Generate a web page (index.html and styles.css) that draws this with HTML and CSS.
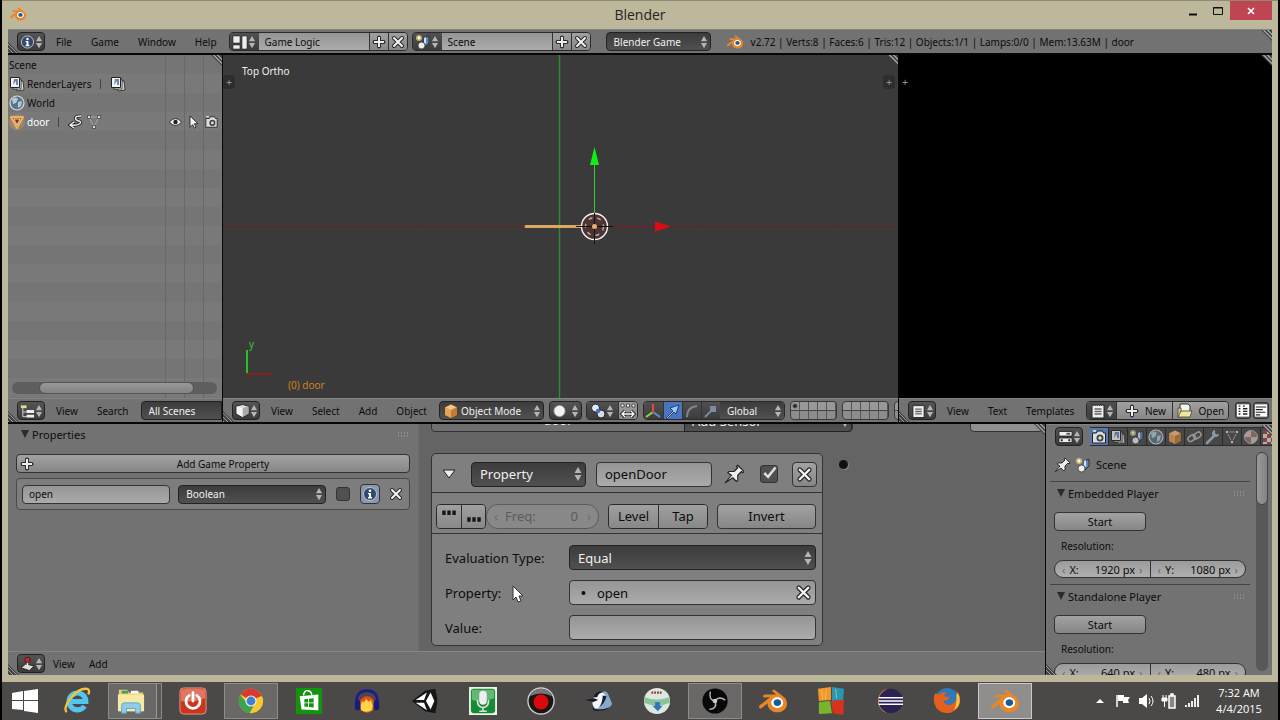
FILE: index.html
```html
<!DOCTYPE html>
<html lang="en">
<head>
  <meta charset="UTF-8">
  <meta name="viewport" content="width=device-width, initial-scale=1.0">
  <title>Blender</title>
  <link rel="stylesheet" href="styles.css">
</head>
<body>
  <!-- Shared icons -->
  <svg class="sprite" aria-hidden="true">
    <symbol id="arrows" viewBox="0 0 8 16"><path d="M4 1l3.5 6h-7zM4 15L.5 9h7z" fill="#b5b5b5"/></symbol>
    <symbol id="plus" viewBox="0 0 16 16"><path d="M8 3.500v9M3.500 8h9" stroke="#2a2a2a" stroke-width="4" stroke-linecap="round"/><path d="M8 3v10M3 8h10" stroke="#eee" stroke-width="2"/></symbol>
    <symbol id="cross" viewBox="0 0 16 16"><path d="M4 4l8 8M12 4l-8 8" stroke="#2a2a2a" stroke-width="4" stroke-linecap="round"/><path d="M4 4l8 8M12 4l-8 8" stroke="#f4f4f4" stroke-width="2" stroke-linecap="round"/></symbol>
    <symbol id="info" viewBox="0 0 16 16"><circle cx="8" cy="8" r="6.500" fill="#33496b" stroke="#b9c6dc"/><circle cx="8" cy="4.700" r="1.300" fill="#fff"/><path d="M6 7h3v4h1v1.500H6V11h1V8.300H6z" fill="#fff"/></symbol>
    <symbol id="layout" viewBox="0 0 16 16"><path d="M1 2h7v7H1zM1 11h7v4H1zM10 2h5v13h-5z" fill="#eee" stroke="#222" stroke-width=".6"/></symbol>
    <symbol id="scene" viewBox="0 0 16 16"><circle cx="4" cy="4" r="3" fill="#d8d490" opacity=".75"/><circle cx="4" cy="4" r="1.400" fill="#fffbd0"/><path d="M9 4l5-2v7l-4 4z" fill="#5f86c0" stroke="#233"/><path d="M9 4l2-1v6l-2 2z" fill="#d6e2f4"/><circle cx="6.500" cy="11.500" r="3.500" fill="#eee" stroke="#333" stroke-width=".8"/></symbol>
    <symbol id="blender" viewBox="0 0 24 24">
      <circle cx="15.700" cy="13.300" r="6" fill="#fff"/>
      <path fill="#1c5a96" d="M12.51 13.214c.046-.8.438-1.506 1.03-2.006a3.424 3.424 0 0 1 2.212-.79c.85 0 1.631.3 2.211.79.592.5.983 1.206 1.028 2.005.045.823-.285 1.586-.865 2.153a3.389 3.389 0 0 1-2.374.938 3.393 3.393 0 0 1-2.376-.938c-.58-.567-.91-1.33-.865-2.152"/>
      <path fill="#ea8528" d="M7.35 14.831c.006.314.106.922.256 1.398a7.372 7.372 0 0 0 1.593 2.757 8.227 8.227 0 0 0 2.787 2.001 8.947 8.947 0 0 0 3.66.76 8.964 8.964 0 0 0 3.657-.772 8.285 8.285 0 0 0 2.785-2.01 7.428 7.428 0 0 0 1.592-2.762 6.964 6.964 0 0 0 .25-3.074 7.123 7.123 0 0 0-1.016-2.779 7.764 7.764 0 0 0-1.852-2.043h.002L13.566 2.55l-.02-.015c-.492-.378-1.319-.376-1.86.002-.547.382-.609 1.015-.123 1.415l-.001.001 3.126 2.543-9.53.01h-.013c-.788.001-1.545.518-1.695 1.172-.154.665.38 1.217 1.2 1.22V8.9l4.83-.01-8.62 6.617-.034.025c-.813.622-1.075 1.658-.563 2.313.52.667 1.625.668 2.447.004L7.414 14s-.069.52-.063.831zm12.09 1.741c-.97.988-2.326 1.548-3.795 1.55-1.47.004-2.827-.552-3.797-1.538a4.51 4.51 0 0 1-1.036-1.622 4.282 4.282 0 0 1 .282-3.519 4.702 4.702 0 0 1 1.153-1.371c.942-.768 2.141-1.183 3.396-1.185 1.256-.002 2.455.41 3.398 1.175.48.391.87.854 1.152 1.367a4.28 4.28 0 0 1 .522 1.706 4.236 4.236 0 0 1-.239 1.811 4.54 4.54 0 0 1-1.035 1.626"/>
    </symbol>
    <symbol id="layers" viewBox="0 0 16 16"><path d="M6 5h8l1 9-7 1z" fill="#d8d8d8" stroke="#222" stroke-width=".8"/><path d="M4 3h8v10H4z" fill="#eee" stroke="#222" stroke-width=".8"/><path d="M1.500 1.500h9v10h-9z" fill="#f4f4f4" stroke="#222"/><path d="M5 3h4v6H7V5L4 9z" fill="#6b87b5"/></symbol>
    <symbol id="world" viewBox="0 0 16 16"><circle cx="8" cy="8" r="7" fill="#5d7488" stroke="#d4dde4" stroke-width="1.200"/><path d="M3 4q4-3 6 0l-2 4-3 1zM9 7l4-1-1 5-3 2z" fill="#b5cbd2"/></symbol>
    <symbol id="mesh" viewBox="0 0 16 16"><circle cx="8" cy="8" r="8" fill="#d9a060" opacity=".35"/><path d="M2 3h12L8 14z" fill="#8c5a22" stroke="#f0b060" stroke-width="2" stroke-linejoin="round"/><path d="M5 5h6l-3 6z" fill="#6b3e12" stroke="#fff0d0" stroke-width=".8"/></symbol>
    <symbol id="meshdata" viewBox="0 0 16 16"><path d="M3 3h10L8 13z" fill="none" stroke="#aaa"/><path d="M1.500 1.500h3v3h-3zM11.500 1.500h3v3h-3zM6.500 11.500h3v3h-3z" fill="#ddd" stroke="#333" stroke-width=".7"/></symbol>
    <symbol id="curve" viewBox="0 0 16 16"><path d="M13 2C5 2 7 6 11 7s0 5-8 4M6 8l-4 3 4 3" fill="none" stroke="#222" stroke-width="3.200"/><path d="M13 2C5 2 7 6 11 7s0 5-8 4M6 8l-4 3 4 3" fill="none" stroke="#eee" stroke-width="1.400"/></symbol>
    <symbol id="eye" viewBox="0 0 16 16"><path d="M1 8q7-8 14 0-7 8-14 0z" fill="#f2f2f2" stroke="#222"/><circle cx="8" cy="8" r="2.500" fill="#222"/></symbol>
    <symbol id="pointer" viewBox="0 0 16 16"><path d="M4 1l9 9H9l2 4-2 1-2-4-3 3z" fill="#f4f4f4" stroke="#222" stroke-linejoin="round"/></symbol>
    <symbol id="camera" viewBox="0 0 16 16"><path d="M1.500 4h4l1-2h5l1 2h2v10h-13z" fill="#ddd" stroke="#222"/><circle cx="9" cy="9" r="3.500" fill="#444"/><circle cx="9" cy="9" r="1.700" fill="#ddd"/><path d="M2 2h3" stroke="#eee" stroke-width="1.500"/></symbol>
    <symbol id="outliner" viewBox="0 0 16 16"><path d="M1 2h6v3H1z" fill="#e8dc8a"/><path d="M3 5v9h4M3 9h4" fill="none" stroke="#ddd"/><path d="M7 7h8v3H7zM7 12h8v3H7z" fill="#eee"/></symbol>
    <symbol id="viewcube" viewBox="0 0 16 16"><path d="M8 1l7 2v8l-7 4-7-4V3z" fill="#ddd" stroke="#222"/><path d="M8 5l6-2v8l-6 3z" fill="#aaa"/><path d="M8 5L2 3v8l6 3z" fill="#f4f4f4"/></symbol>
    <symbol id="cube" viewBox="0 0 16 16"><path d="M8 1l6 3v8l-6 3-6-3V4z" fill="#f6c489" stroke="#5a3a15" stroke-width=".8"/><path d="M8 7l6-3v8l-6 3z" fill="#c07e33"/><path d="M2 4l6 3v8l-6-3z" fill="#e5a35a"/></symbol>
    <symbol id="ball" viewBox="0 0 16 16"><circle cx="8" cy="8" r="6" fill="#f2f2f2" stroke="#999"/></symbol>
    <symbol id="pivot" viewBox="0 0 16 16"><circle cx="5.500" cy="5" r="4" fill="#e4ebf5" stroke="#223"/><circle cx="11" cy="11" r="4" fill="#d5dce8" stroke="#223"/><circle cx="8" cy="8" r="2.200" fill="#3f74c4"/></symbol>
    <symbol id="manip" viewBox="0 0 16 16"><path d="M2 11h12M5 8l-3 3 3 3M11 8l3 3-3 3" fill="none" stroke="#222" stroke-width="3.200"/><path d="M2 11h12M5 8l-3 3 3 3M11 8l3 3-3 3" fill="none" stroke="#fff" stroke-width="1.300"/><path d="M1 1h3v3H1zM6.500 1h3v3h-3zM12 1h3v3h-3z" fill="#eee" stroke="#222" stroke-width=".7"/></symbol>
    <symbol id="axes" viewBox="0 0 16 16"><path d="M8 9l-7 5" stroke="#7fe04a" stroke-width="2"/><path d="M8 9l7 5" stroke="#5d8fe0" stroke-width="2"/><path d="M8 10V1" stroke="#e8453c" stroke-width="2"/></symbol>
    <symbol id="translate" viewBox="0 0 16 16"><path d="M1 15l7-7-3-3 9-3-3 9-2-2-7 7z" fill="#9cc4ff" stroke="#1b2c50" stroke-width=".8"/></symbol>
    <symbol id="rotate" viewBox="0 0 16 16"><path d="M3 14Q3 4 13 3" fill="none" stroke="#7d8490" stroke-width="2"/></symbol>
    <symbol id="scale" viewBox="0 0 16 16"><path d="M2 14l7-7" stroke="#7d8aa0" stroke-width="2"/><path d="M7 3h6v6H7z" fill="#7d8aa0"/></symbol>
    <symbol id="textdoc" viewBox="0 0 16 16"><path d="M2 2h12v13H2z" fill="#eee" stroke="#222"/><path d="M3 2h10" stroke="#444" stroke-width="2" stroke-dasharray="1 1"/><path d="M4.500 6h7M4.500 8.500h7M4.500 11h7" stroke="#666" stroke-width="1.400"/></symbol>
    <symbol id="folder" viewBox="0 0 16 16"><path d="M3 1h8l2 2v8H3z" fill="#f4f4f4" stroke="#333"/><path d="M1 5h3v9H1z" fill="#d9cf8b" stroke="#4a4422" stroke-width=".8"/><path d="M4 8h11l-2 6H1z" fill="#efe6a5" stroke="#4a4422" stroke-width=".8"/></symbol>
    <symbol id="numbers" viewBox="0 0 16 16"><path d="M1 1h14v14H1z" fill="#fff"/><path d="M3 3h2M3 6h2M3 9h2M3 12h2M8 3h2M8 6h5M8 9h5M8 12h5" fill="none" stroke="#222" stroke-width="1.500"/></symbol>
    <symbol id="wrap" viewBox="0 0 16 16"><path d="M1 1h14v14H1z" fill="#fff"/><path d="M2 4h12M2 7h8M2 10h11M2 13h5" stroke="#222" stroke-width="1.400"/></symbol>
    <symbol id="joystick" viewBox="0 0 16 16"><path d="M1 12l5-4 9 2-5 5z" fill="#ddd" stroke="#222"/><path d="M8 11V5" stroke="#eee" stroke-width="1.500"/><circle cx="8" cy="3.500" r="2.800" fill="#c62a26" stroke="#511"/></symbol>
    <symbol id="props" viewBox="0 0 16 16"><path d="M1 2h14v5H1zM1 9h14v5H1z" fill="#eee" stroke="#222"/><path d="M9 3.500h4v2H9z" fill="#555"/><path d="M3 11.500h2M11 11.500h2" stroke="#222" stroke-width="2"/></symbol>
    <symbol id="pin" viewBox="0 0 16 16"><path d="M1 15l5-6-3-2 1-1 4 0 3-3-1-1 1-1 5 5-1 1-1-1-3 3v4l-1 1-3-3z" fill="#eee" stroke="#222" stroke-width=".9" stroke-linejoin="round"/></symbol>
    <symbol id="link" viewBox="0 0 16 16"><rect x="1.500" y="7" width="8" height="5" rx="2.500" transform="rotate(-35 5 9)" fill="none" stroke="#bbb" stroke-width="1.500"/><rect x="7" y="4" width="8" height="5" rx="2.500" transform="rotate(-35 11 6)" fill="none" stroke="#bbb" stroke-width="1.500"/></symbol>
    <symbol id="wrench" viewBox="0 0 16 16"><path d="M2 14l7-7" stroke="#a9bccd" stroke-width="2.600" stroke-linecap="round"/><path d="M14 5a3.500 3.500 0 1 1-4-4v3l1.500 1.500z" fill="#a9bccd"/></symbol>
    <symbol id="material" viewBox="0 0 16 16"><circle cx="8" cy="8" r="6.500" fill="#9c7068" stroke="#ccc" stroke-width=".8"/><path d="M8 1.500A6.500 6.500 0 0 0 1.500 8H8zM8 8h6.500A6.500 6.500 0 0 1 8 14.500z" fill="#c9c2bf"/></symbol>
    <symbol id="checker" viewBox="0 0 16 16"><path d="M1 1h14v14H1z" fill="#ddd"/><path d="M1 1h4v4H1zM9 1h4v4H9zM5 5h4v4H5zM13 5h2v4h-2zM1 9h4v4H1zM9 9h4v4H9zM5 13h4v2H5z" fill="#a5433c"/></symbol>
    <symbol id="pulse-up" viewBox="0 0 16 16"><path d="M2 3h3v4H2zM6.500 3h3v4h-3zM11 3h3v4h-3z" fill="#161616"/></symbol>
    <symbol id="pulse-down" viewBox="0 0 16 16"><path d="M2 9h3v4H2zM6.500 9h3v4h-3zM11 9h3v4h-3z" fill="#161616"/></symbol>
    <symbol id="tri" viewBox="0 0 8 8"><path d="M0 0h8L4 8z" fill="#2b2b2b"/></symbol>
    <symbol id="grip" viewBox="0 0 12 5"><path d="M0 1h12M0 4h12" stroke="#aaa" stroke-dasharray="1 2"/></symbol>
  </svg>

  <main class="window">
    <header class="titlebar">
      <svg class="app-icon"><use href="#blender"/></svg>
      <h1>Blender</h1>
      <div class="window-buttons">
        <button type="button" aria-label="Minimize"><svg viewBox="0 0 12 12"><path d="M2 9.500h8" stroke="#111" stroke-width="2"/></svg></button>
        <button type="button" aria-label="Maximize"><svg viewBox="0 0 12 12"><path d="M1.500 2.500h9v7h-9zM1 3h10" fill="none" stroke="#111"/></svg></button>
        <button type="button" class="close" aria-label="Close"><svg viewBox="0 0 12 12"><path d="M3 3l6 6M9 3l-6 6" stroke="#fff" stroke-width="1.600"/></svg></button>
      </div>
    </header>

    <div class="workspace">
      <!-- Info bar -->
      <div class="bar info-bar">
        <button type="button" class="editor-type" aria-label="Info editor"><svg><use href="#info"/></svg><svg class="arrows"><use href="#arrows"/></svg></button>
        <nav class="menu">
          <a href="#">File</a>
          <a href="#">Game</a>
          <a href="#">Window</a>
          <a href="#">Help</a>
        </nav>
        <div class="group data-block">
          <button type="button" class="dark" aria-label="Browse screens"><svg><use href="#layout"/></svg><svg class="arrows"><use href="#arrows"/></svg></button>
          <input type="text" value="Game Logic" aria-label="Screen">
          <button type="button" aria-label="Add screen"><svg><use href="#plus"/></svg></button>
          <button type="button" aria-label="Delete screen"><svg><use href="#cross"/></svg></button>
        </div>
        <div class="group data-block">
          <button type="button" class="dark" aria-label="Browse scenes"><svg><use href="#scene"/></svg><svg class="arrows"><use href="#arrows"/></svg></button>
          <input type="text" value="Scene" aria-label="Scene">
          <button type="button" aria-label="Add scene"><svg><use href="#plus"/></svg></button>
          <button type="button" aria-label="Delete scene"><svg><use href="#cross"/></svg></button>
        </div>
        <span class="drop engine"><select aria-label="Engine"><option>Blender Game</option></select><svg class="arrows"><use href="#arrows"/></svg></span>
        <svg class="logo"><use href="#blender"/></svg>
        <span class="stats">v2.72 | Verts:8 | Faces:6 | Tris:12 | Objects:1/1 | Lamps:0/0 | Mem:13.63M | door</span>
        <i class="corner top"></i><i class="corner bottom"></i>
      </div>

      <div class="upper">
        <!-- Outliner -->
        <section class="area outliner">
          <div class="tree">
            <ul>
              <li>Scene</li>
              <li><svg><use href="#layers"/></svg><span>RenderLayers</span><i class="sep"></i><svg><use href="#layers"/></svg></li>
              <li><svg><use href="#world"/></svg><span>World</span></li>
              <li class="active"><svg><use href="#mesh"/></svg><span>door</span><i class="sep"></i><svg><use href="#curve"/></svg><svg><use href="#meshdata"/></svg>
                <span class="toggles">
                  <button type="button" aria-label="Visible"><svg><use href="#eye"/></svg></button>
                  <button type="button" aria-label="Selectable"><svg><use href="#pointer"/></svg></button>
                  <button type="button" aria-label="Renderable"><svg><use href="#camera"/></svg></button>
                </span>
              </li>
            </ul>
            <div class="hscroll"><span></span></div>
            <i class="corner top"></i>
          </div>
          <div class="bar">
            <button type="button" class="editor-type" aria-label="Outliner editor"><svg><use href="#outliner"/></svg><svg class="arrows"><use href="#arrows"/></svg></button>
            <nav class="menu"><a href="#">View</a><a href="#">Search</a></nav>
            <span class="drop scenes"><select aria-label="Display mode"><option>All Scenes</option></select></span>
            <i class="corner bottom"></i>
          </div>
        </section>

        <!-- 3D view -->
        <section class="area view3d">
          <div class="viewport">
            <svg class="canvas" viewBox="0 0 675 343" preserveAspectRatio="xMidYMid slice">
              <path d="M196 0v343M476 0v343M616 0v343M0 31h675M0 311h675" stroke="#3d3d3d"/>
              <path d="M0 171.500h675" stroke="#74191f"/>
              <path d="M336.500 0v343" stroke="#2c8a32" stroke-width="1.500"/>
              <path d="M303 171.500h60" stroke="#dda85f" stroke-width="3" stroke-linecap="round"/>
              <circle cx="371.500" cy="171.500" r="13" fill="#4a3434" stroke="#f4f4f4" stroke-width="1.400"/>
              <circle cx="371.500" cy="171.500" r="9" fill="none" stroke="#d99" stroke-width="1.500" stroke-dasharray="4 5"/>
              <path d="M353 171.500h37M371.500 155v34" stroke="#111"/>
              <path d="M371.500 158v-52" stroke="#2fd02f"/>
              <path d="M371.500 92l4.500 18h-9z" fill="#12ee12"/>
              <path d="M390 171.500h42" stroke="#8a141a"/>
              <path d="M448 171.500l-16-5v10z" fill="#e00a14"/>
              <circle cx="371.500" cy="171.500" r="2.500" fill="#e8b06a"/>
              <path d="M24 318v-23" stroke="#22c322" stroke-width="2"/>
              <path d="M23 319h26" stroke="#8c1b1e" stroke-width="2"/>
            </svg>
            <span class="view-name">Top Ortho</span>
            <span class="axis-y">y</span>
            <span class="object-name">(0) door</span>
            <i class="region-tab left">+</i><i class="region-tab right">+</i>
            <i class="corner top"></i>
          </div>
          <div class="bar">
            <button type="button" class="editor-type" aria-label="3D view editor"><svg><use href="#viewcube"/></svg><svg class="arrows"><use href="#arrows"/></svg></button>
            <nav class="menu"><a href="#">View</a><a href="#">Select</a><a href="#">Add</a><a href="#">Object</a></nav>
            <span class="drop mode"><svg class="lead"><use href="#cube"/></svg><select aria-label="Mode"><option>Object Mode</option></select><svg class="arrows"><use href="#arrows"/></svg></span>
            <button type="button" class="editor-type shading" aria-label="Shading"><svg><use href="#ball"/></svg><svg class="arrows"><use href="#arrows"/></svg></button>
            <div class="group pivot">
              <button type="button" class="dark" aria-label="Pivot point"><svg><use href="#pivot"/></svg><svg class="arrows"><use href="#arrows"/></svg></button>
              <button type="button" aria-label="Manipulate centers"><svg><use href="#manip"/></svg></button>
            </div>
            <div class="group transform">
              <button type="button" class="dark" aria-label="Manipulator"><svg><use href="#axes"/></svg></button>
              <button type="button" class="dark on" aria-label="Translate"><svg><use href="#translate"/></svg></button>
              <button type="button" class="dark" aria-label="Rotate"><svg><use href="#rotate"/></svg></button>
              <button type="button" class="dark" aria-label="Scale"><svg><use href="#scale"/></svg></button>
              <span class="drop orient"><select aria-label="Orientation"><option>Global</option></select><svg class="arrows"><use href="#arrows"/></svg></span>
            </div>
            <div class="layer-grid first"></div>
            <div class="layer-grid"></div>
            <div class="layer-grid"></div>
            <i class="corner bottom"></i>
          </div>
        </section>

        <!-- Text editor -->
        <section class="area text-editor">
          <div class="black"><i class="region-tab left">+</i><i class="corner top"></i></div>
          <div class="bar">
            <button type="button" class="editor-type" aria-label="Text editor"><svg><use href="#textdoc"/></svg><svg class="arrows"><use href="#arrows"/></svg></button>
            <nav class="menu"><a href="#">View</a><a href="#">Text</a><a href="#">Templates</a></nav>
            <div class="group files">
              <button type="button" class="dark" aria-label="Browse text"><svg><use href="#textdoc"/></svg><svg class="arrows"><use href="#arrows"/></svg></button>
              <button type="button" class="wide"><svg><use href="#plus"/></svg>New</button>
              <button type="button" class="wide"><svg><use href="#folder"/></svg>Open</button>
            </div>
            <div class="view-toggles">
              <button type="button" aria-label="Line numbers"><svg><use href="#numbers"/></svg></button>
              <button type="button" aria-label="Word wrap"><svg><use href="#wrap"/></svg></button>
            </div>
            <i class="corner bottom"></i>
          </div>
        </section>
      </div>

      <div class="lower">
        <!-- Logic editor -->
        <section class="area logic">
          <div class="logic-body">
            <aside class="game-props">
              <h2><svg class="tri"><use href="#tri"/></svg>Properties<svg class="grip"><use href="#grip"/></svg></h2>
              <button type="button" class="add-prop"><svg><use href="#plus"/></svg><span>Add Game Property</span></button>
              <div class="prop-row">
                <input type="text" value="open" aria-label="Property name">
                <span class="drop"><select aria-label="Property type"><option>Boolean</option></select><svg class="arrows"><use href="#arrows"/></svg></span>
                <input type="checkbox" aria-label="Property value">
                <button type="button" class="debug" aria-label="Show debug info"><svg><use href="#info"/></svg></button>
                <button type="button" class="plain" aria-label="Remove property"><svg><use href="#cross"/></svg></button>
              </div>
            </aside>

            <div class="bricks">
              <div class="sensors">
                <div class="brick-head">
                  <span>door</span>
                  <span class="drop"><select aria-label="Add Sensor"><option>Add Sensor</option></select><svg class="arrows"><use href="#arrows"/></svg></span>
                </div>
                <div class="brick-row">
                  <form class="brick">
                    <div class="brick-title">
                      <button type="button" class="plain" aria-label="Collapse"><svg viewBox="0 0 16 16"><path d="M2 4h12l-6 8z" fill="#eee" stroke="#222"/></svg></button>
                      <span class="drop"><select aria-label="Sensor type"><option>Property</option></select><svg class="arrows"><use href="#arrows"/></svg></span>
                      <input type="text" value="openDoor" aria-label="Sensor name">
                      <button type="button" class="plain pin" aria-label="Pin"><svg><use href="#pin"/></svg></button>
                      <input type="checkbox" checked aria-label="Active">
                      <button type="button" class="remove" aria-label="Remove sensor"><svg><use href="#cross"/></svg></button>
                    </div>
                    <div class="brick-pulse">
                      <div class="group">
                        <button type="button" aria-label="True pulse"><svg><use href="#pulse-up"/></svg></button>
                        <button type="button" aria-label="False pulse"><svg><use href="#pulse-down"/></svg></button>
                      </div>
                      <label class="number disabled"><i>‹</i><span>Freq:</span><input type="text" value="0" disabled><i>›</i></label>
                      <div class="group taps">
                        <button type="button">Level</button>
                        <button type="button">Tap</button>
                      </div>
                      <button type="button" class="invert">Invert</button>
                    </div>
                    <div class="brick-fields">
                      <label for="eval">Evaluation Type:</label>
                      <span class="drop"><select id="eval"><option>Equal</option></select><svg class="arrows"><use href="#arrows"/></svg></span>
                      <label for="prop">Property:</label>
                      <span class="search"><b>•</b><input type="text" id="prop" value="open"><button type="button" class="plain" aria-label="Clear property"><svg><use href="#cross"/></svg></button></span>
                      <label for="value">Value:</label>
                      <input type="text" id="value">
                    </div>
                  </form>
                  <i class="socket"></i>
                </div>
              </div>
              <div class="controllers"><div class="brick-head"></div></div>
              <svg class="cursor" viewBox="0 0 12 18"><path d="M1 1v14l3-3 2 5 3-1-2-5h4z" fill="#fff" stroke="#333"/></svg>
              <i class="corner top"></i>
            </div>
          </div>
          <div class="bar">
            <button type="button" class="editor-type" aria-label="Logic editor"><svg><use href="#joystick"/></svg><svg class="arrows"><use href="#arrows"/></svg></button>
            <nav class="menu tight"><a href="#">View</a><a href="#">Add</a></nav>
            <i class="corner bottom"></i>
          </div>
        </section>

        <!-- Properties editor -->
        <section class="area properties">
          <div class="bar">
            <button type="button" class="editor-type" aria-label="Properties editor"><svg><use href="#props"/></svg><svg class="arrows"><use href="#arrows"/></svg></button>
            <div class="tabs">
              <button type="button" class="on" aria-label="Render"><svg><use href="#camera"/></svg></button>
              <button type="button" aria-label="Render layers"><svg><use href="#layers"/></svg></button>
              <button type="button" aria-label="Scene"><svg><use href="#scene"/></svg></button>
              <button type="button" aria-label="World"><svg><use href="#world"/></svg></button>
              <button type="button" aria-label="Object"><svg><use href="#cube"/></svg></button>
              <button type="button" aria-label="Constraints"><svg><use href="#link"/></svg></button>
              <button type="button" aria-label="Modifiers"><svg><use href="#wrench"/></svg></button>
              <button type="button" aria-label="Data"><svg><use href="#meshdata"/></svg></button>
              <button type="button" aria-label="Material"><svg><use href="#material"/></svg></button>
              <button type="button" aria-label="Texture"><svg><use href="#checker"/></svg></button>
            </div>
            <i class="corner top"></i>
          </div>
          <div class="props-body">
            <div class="panels">
              <div class="crumb"><svg><use href="#pin"/></svg><svg><use href="#scene"/></svg>Scene</div>
              <section class="panel">
                <h2><svg class="tri"><use href="#tri"/></svg>Embedded Player<svg class="grip"><use href="#grip"/></svg></h2>
                <button type="button" class="start">Start</button>
                <p>Resolution:</p>
                <div class="numbers">
                  <label class="number"><i>‹</i><span>X:</span><input type="text" value="1920 px"><i>›</i></label>
                  <label class="number"><i>‹</i><span>Y:</span><input type="text" value="1080 px"><i>›</i></label>
                </div>
              </section>
              <section class="panel">
                <h2><svg class="tri"><use href="#tri"/></svg>Standalone Player<svg class="grip"><use href="#grip"/></svg></h2>
                <button type="button" class="start">Start</button>
                <p>Resolution:</p>
                <div class="numbers">
                  <label class="number"><i>‹</i><span>X:</span><input type="text" value="640 px"><i>›</i></label>
                  <label class="number"><i>‹</i><span>Y:</span><input type="text" value="480 px"><i>›</i></label>
                </div>
              </section>
            </div>
            <div class="vscroll"><span></span></div>
            <i class="corner bottom"></i>
          </div>
        </section>
      </div>
    </div>
  </main>

  <footer class="taskbar">
    <button type="button" class="start-menu" aria-label="Start"><svg viewBox="0 0 26 24"><path d="M0 4l11-2v9H0zM12 2l14-2v11H12zM0 12h11v9L0 20zM12 12h14v12l-14-2z" fill="#fff"/></svg></button>
    <div class="apps">
      <button type="button" aria-label="Internet Explorer"><svg viewBox="0 0 30 30"><path d="M23 20.500a9 9 0 1 1 1.500-5H9" fill="none" stroke="#53c5ee" stroke-width="5.500"/><path d="M4 27C-2 22 14 0 26 2c3 1 2 4 1 6" fill="none" stroke="#f2c53a" stroke-width="2.500"/></svg></button>
      <button type="button" class="open stacked" aria-label="File Explorer"><svg viewBox="0 0 30 30"><path d="M2 3h9l2 3h15v20H2z" fill="#e7cf78"/><path d="M5 4h7v3H5z" fill="#4a9b57"/><path d="M15 4h8v3h-8z" fill="#f6f6f6"/><path d="M1 8h28v18H1z" fill="#f8e9a4"/><path d="M5 28v-8q0-3 3-3h14q3 0 3 3v8h-5v-5H10v5z" fill="#8fcdea" stroke="#5aa5cc"/></svg></button>
      <button type="button" aria-label="Power"><svg viewBox="0 0 30 30"><rect x="1" y="1" width="28" height="28" rx="4" fill="#c9351d" stroke="#e59c8c"/><path d="M2 3q13-3 26 0v9q-13 5-26 3z" fill="#e07561"/><path d="M11 9a7.500 7.500 0 1 0 8 0M15 6v9" fill="none" stroke="#fff" stroke-width="3" stroke-linecap="round"/></svg></button>
      <button type="button" class="open" aria-label="Chrome"><svg viewBox="0 0 30 30"><circle cx="15" cy="15" r="13" fill="#f6ca2c"/><path d="M15 15L4 8a13 13 0 0 1 22.500 1z" fill="#d93a2e"/><path d="M3.500 8.500a13 13 0 0 0 10 19.500l5-9-7-1z" fill="#3da44b"/><path d="M4 8h22l1 2H15z" fill="#d93a2e"/><circle cx="15" cy="15" r="6" fill="#eee"/><circle cx="15" cy="15" r="4.700" fill="#3f7ed0"/></svg></button>
      <button type="button" aria-label="Store"><svg viewBox="0 0 30 30"><path d="M1 1h28v28H1z" fill="#13940f"/><path d="M5 10l20-2v17L7 24z" fill="#fff"/><path d="M9 9q1-6 5-5t4 5" fill="none" stroke="#fff" stroke-width="1.500"/><path d="M10 13l4-.5v4h-4zM15 12.500l5-.5v4.500h-5zM10 17.500h4v4l-4-.5zM15 17.500h5V22l-5-.5z" fill="#13940f"/></svg></button>
      <button type="button" aria-label="Audacity"><svg viewBox="0 0 30 30"><path d="M4 20Q2 4 15 4t11 16" fill="none" stroke="#1c1c8c" stroke-width="3"/><circle cx="15" cy="19" r="8.500" fill="#ef6a1e"/><path d="M8 20l2-5 2 2 2-4 3 3 2-2 2 6-1 5q-6 3-11 0z" fill="#ffd84a"/><path d="M8 16q1-6 7-6t7 6l-3-3-2 2-3-3-3 3z" fill="#e04a1c"/><rect x="2" y="14" width="6" height="11" rx="3" fill="#1a1a78"/><rect x="22" y="14" width="6" height="11" rx="3" fill="#1a1a78"/></svg></button>
      <button type="button" aria-label="Unity"><svg viewBox="0 0 30 30"><path d="M1 15L15 4l11-2 2 10v6l-2 10-11-2z" fill="#151515"/><path d="M5 14l12-8-3 8zM5 17h9l3 8zM16 15l5-9 4 9-4 9z" fill="#fff"/></svg></button>
      <button type="button" aria-label="Recorder"><svg viewBox="0 0 30 30"><path d="M0 0h30v30H0z" fill="#e9f4e9"/><rect x="2" y="2" width="26" height="26" rx="3" fill="#168b35"/><path d="M3 3h24v9q-12 5-24 2z" fill="#63b877"/><rect x="11" y="4" width="8" height="15" rx="4" fill="#eee"/><path d="M9 14q0 8 6 8t6-8M15 22v4M11 26h8" fill="none" stroke="#ddd" stroke-width="1.800"/></svg></button>
      <button type="button" aria-label="Screen capture"><svg viewBox="0 0 30 30"><circle cx="15" cy="15" r="14" fill="#1a1616" stroke="#ccc" stroke-width="1.500"/><path d="M3 10a13 13 0 0 1 24 0q-12-6-24 0z" fill="#777"/><circle cx="15" cy="16" r="8" fill="#d9090c"/></svg></button>
      <button type="button" aria-label="BlueJ"><svg viewBox="0 0 30 30"><path d="M14 6q8-4 11 2l4 10-1 2q-6 6-19 4 3-12 5-18z" fill="#86a9c9"/><path d="M9 12q3-7 10-6 4 2 2 8-5 10-10 9-5-4-2-11z" fill="#f3f6fa"/><path d="M0 14l10-2 4 2-5 2zM9 11q3-8 12-6-7 1-8 6zM19 9l4 1q-2 8-8 12 4-6 4-13zM8 22q6 4 18 0-6 5-17 3z" fill="#151c2a"/></svg></button>
      <button type="button" aria-label="Downloader"><svg viewBox="0 0 30 30"><circle cx="15" cy="15" r="14" fill="#dbe9e3"/><path d="M2 11q12 5 26 0l1 6q-14 6-28 0z" fill="#8cc49a"/><path d="M9 6h12" stroke="#a33" stroke-width="2.500" stroke-dasharray="2 1"/><path d="M13 16h5v4h3l-5 6-6-6h3z" fill="#3376b5"/></svg></button>
      <button type="button" class="open" aria-label="OBS"><svg viewBox="0 0 30 30"><circle cx="15" cy="15" r="13.500" fill="#080808"/><path d="M15 15Q8 14 10 5M15 15q4-6 11-1M15 15q3 8-6 9" fill="none" stroke="#bbb" stroke-width="1.500"/><circle cx="15" cy="15" r="2.500" fill="#ccc"/></svg></button>
      <button type="button" aria-label="Blender"><svg><use href="#blender"/></svg></button>
      <button type="button" aria-label="Antivirus"><svg viewBox="0 0 30 30"><path d="M1 2l14-2v14l-13 1z" fill="#f0962c"/><path d="M16 0l13 2-1 12-12 1z" fill="#2a94b4"/><path d="M2 16l12-1 2 13-14 1z" fill="#77b62b"/><path d="M15 15l14-1-1 16-11-2z" fill="#d8321e"/><path d="M5 3l1 10M10 2l-1 11M20 2l1 10" stroke="#ffdf70" stroke-width="1" opacity=".6"/></svg></button>
      <button type="button" aria-label="Eclipse"><svg viewBox="0 0 30 30"><path d="M13 2a13.500 13.500 0 0 0 0 26A16 16 0 0 1 13 2z" fill="#f0a445"/><circle cx="17" cy="15" r="13" fill="#2c2255"/><path d="M4 11.500h26M4 15h26M4 18.500h26" stroke="#fff" stroke-width="1.800"/></svg></button>
      <button type="button" aria-label="Firefox"><svg viewBox="0 0 30 30"><circle cx="15" cy="14" r="13" fill="#2f79b8"/><path d="M2 7q-3 9 2 16 7 7 16 4 10-4 9-16-1-5-4-7 3 12-6 15-6 1-8-4l5-1 2-3-6-1q0-3 3-4-5-2-8 2z" fill="#e4601c"/><path d="M27 7q5 12-5 18 4-6 3-17z" fill="#f8c63d"/></svg></button>
      <button type="button" class="open current" aria-label="Blender window"><svg><use href="#blender"/></svg></button>
    </div>
    <div class="tray">
      <svg viewBox="0 0 16 16"><path d="M4 10l4-4 4 4z" fill="#fff"/></svg>
      <svg viewBox="0 0 16 16"><path d="M2 2v12" stroke="#fff" stroke-width="1.500"/><path d="M3 2h6v2h6l-2 3 1 3H8V8H3z" fill="#fff"/></svg>
      <svg viewBox="0 0 16 16"><path d="M1 5h3l5-4v14l-5-4H1z" fill="#fff"/><path d="M11 5q2 3 0 6M13 3q4 5 0 10" fill="none" stroke="#fff"/></svg>
      <svg viewBox="0 0 16 16"><path d="M8 3h6v12H8zM10 1h2v2h-2z" fill="#888" stroke="#fff" stroke-width="1.500"/><path d="M2 2v3M5 2v3M1 5h5v3H1zM3.500 8v6" stroke="#fff" fill="#fff"/></svg>
      <svg viewBox="0 0 16 16"><path d="M2 14v-2M5 14v-4M8 14V8M11 14V5M14 14V2" stroke="#fff" stroke-width="1.800"/></svg>
    </div>
    <div class="clock"><time>7:32 AM</time><time>4/4/2015</time></div>
  </footer>
</body>
</html>
```
FILE: styles.css
```css
* {
  box-sizing: border-box;
}
body {
  margin: 0;
  padding: 0 2px;
  height: 100vh;
  display: flex;
  flex-direction: column;
  overflow: hidden;
  background: #000;
  color: #0c0c0c;
  font-family: "Noto Sans", "Open Sans", sans-serif;
  font-size: 10px;
}
h1, h2, p, ul {
  margin: 0;
  padding: 0;
  font-weight: normal;
}
i, b {
  font-style: normal;
}
a {
  color: inherit;
  text-decoration: none;
}
button, input, select {
  margin: 0;
  color: inherit;
  font: inherit;
  min-width: 0;
}
svg {
  display: block;
  width: 16px;
  height: 16px;
  flex: none;
}
.sprite {
  position: absolute;
  width: 0;
  height: 0;
}
svg.arrows {
  width: 8px;
  height: 14px;
}

/* Window frame */
.window {
  flex: 1;
  min-height: 0;
  display: flex;
  flex-direction: column;
  padding: 0 6px 7px;
  background: #bdb79b;
  border-top: 1px solid #8e8a74;
}
.titlebar {
  display: grid;
  grid-template-columns: 1fr auto 1fr;
  height: 28px;
}
.titlebar h1 {
  font-family: "Open Sans", sans-serif;
  font-size: 14px;
  line-height: 27px;
  color: #26241c;
}
.app-icon {
  margin: 5px 2px;
}
.window-buttons {
  display: flex;
  justify-content: flex-end;
  align-items: flex-start;
}
.window-buttons button {
  display: grid;
  place-items: center;
  width: 25px;
  height: 19px;
  padding: 0;
  border: 0;
  background: none;
}
.window-buttons svg {
  width: 12px;
  height: 12px;
}
.window-buttons .close {
  width: 42px;
  background: #c04552;
}

.workspace {
  flex: 1;
  min-height: 0;
  display: grid;
  grid-template-rows: 24px minmax(0, 367fr) minmax(0, 251fr);
  gap: 2px;
  background: #060606;
}
.upper, .lower {
  display: grid;
  gap: 1px;
}
.upper {
  grid-template-columns: minmax(0, 214fr) minmax(0, 675fr) minmax(0, 373fr);
}
.lower {
  grid-template-columns: minmax(0, 1037fr) minmax(0, 226fr);
}
.area {
  display: flex;
  flex-direction: column;
  min-height: 0;
  overflow: hidden;
  background: #727272;
}

/* Header bars */
.bar {
  position: relative;
  display: flex;
  align-items: center;
  flex: none;
  height: 24px;
  padding-left: 9px;
  overflow: hidden;
  background: #727272;
  border-top: 1px solid #848484;
  white-space: nowrap;
}
.editor-type {
  display: flex;
  align-items: center;
  justify-content: space-between;
  flex: none;
  width: 28px;
  height: 19px;
  padding: 0 2px;
  border: 1px solid #222;
  border-radius: 4px;
  background: linear-gradient(#545454, #3c3c3c);
}
.editor-type svg:first-child {
  width: 15px;
}
.menu {
  display: flex;
  gap: 19px;
  padding: 0 12px 0 11px;
}
.menu.tight {
  gap: 14px;
  padding-left: 8px;
}
.group {
  display: flex;
  flex: none;
  height: 19px;
  border: 1px solid #2a2a2a;
  border-radius: 4px;
  overflow: hidden;
}
.group button {
  display: flex;
  align-items: center;
  justify-content: center;
  width: 19px;
  padding: 0;
  border: 0;
  border-left: 1px solid #333;
  background: linear-gradient(#a0a0a0, #888);
}
.group button:first-child {
  border-left: 0;
}
.group button.dark {
  background: linear-gradient(#505050, #3c3c3c);
}
.group button.on {
  background: #4a74bd;
}
input[type="text"] {
  padding: 0 6px;
  border: 1px solid #333;
  border-radius: 4px;
  background: linear-gradient(#959595, #ababab);
}
.drop {
  display: grid;
  align-items: center;
  height: 19px;
  border: 1px solid #222;
  border-radius: 4px;
  background: linear-gradient(#3c3c3c, #505050);
  color: #f0f0f0;
}
.drop select {
  grid-area: 1 / 1;
  width: 100%;
  height: 100%;
  padding: 0 7px;
  border: 0;
  background: none;
  appearance: none;
}
.drop .arrows {
  grid-area: 1 / 1;
  justify-self: end;
  margin-right: 2px;
  pointer-events: none;
}
.data-block {
  margin-right: 4px;
}
.group.data-block .dark, .group.files .dark {
  width: 29px;
}
.data-block input[type="text"] {
  width: 110px;
  border: 0;
  border-radius: 0;
}
.info-bar .engine {
  width: 105px;
  margin-left: 11px;
}
.logo {
  margin: 0 8px 0 16px;
}

/* Area corner handles */
.corner {
  position: absolute;
  width: 11px;
  height: 11px;
  pointer-events: none;
  background: repeating-linear-gradient(45deg, #999 0 1px, #444 1px 3px);
}
.corner.top {
  top: 0;
  right: 0;
  clip-path: polygon(0 0, 100% 0, 100% 100%);
}
.corner.bottom {
  bottom: 0;
  left: 0;
  clip-path: polygon(0 0, 100% 100%, 0 100%);
}

/* Outliner */
.tree {
  position: relative;
  flex: 1;
  display: flex;
  flex-direction: column;
  justify-content: space-between;
  background:
    linear-gradient(#686868, #686868) right 56px top / 1px 100% no-repeat,
    linear-gradient(#686868, #686868) right 37px top / 1px 100% no-repeat,
    linear-gradient(#686868, #686868) right 18px top / 1px 100% no-repeat,
    repeating-linear-gradient(#757575 0 19px, #797979 19px 38px);
}
.tree li {
  display: flex;
  align-items: center;
  height: 19px;
  padding: 0 3px 0 1px;
  gap: 2px;
}
.tree li .sep {
  width: 1px;
  height: 10px;
  margin: 0 7px;
  background: #444;
}
.tree .active {
  color: #fff;
}
.toggles {
  display: flex;
  gap: 3px;
  margin-left: auto;
}
.toggles button, .plain {
  display: flex;
  align-items: center;
  padding: 0;
  border: 0;
  background: none;
}
.toggles svg {
  width: 15px;
  height: 14px;
}
.hscroll {
  height: 12px;
  margin: 0 5px 4px 4px;
  border-radius: 6px;
  background: #5e5e5e;
}
.hscroll span {
  display: block;
  width: 76%;
  height: 12px;
  margin-left: 13%;
  border: 1px solid #555;
  border-radius: 6px;
  background: linear-gradient(#999, #838383);
}
.scenes {
  flex: 1;
  border-radius: 4px 0 0 4px;
}

/* 3D view */
.viewport {
  position: relative;
  flex: 1;
  background: #3a3a3a;
}
.canvas {
  position: absolute;
  width: 100%;
  height: 100%;
}
.view-name, .object-name, .axis-y {
  position: absolute;
}
.view-name {
  top: 9px;
  left: 19px;
  color: #eee;
}
.object-name {
  bottom: 6px;
  left: 65px;
  color: #d08020;
}
.axis-y {
  bottom: 47px;
  left: 26px;
  color: #32c832;
}
.region-tab {
  position: absolute;
  top: 20px;
  width: 12px;
  border-radius: 4px;
  background: #2d2d2d;
  color: #999;
  line-height: 14px;
  text-align: center;
}
.region-tab.left {
  left: 0;
}
.region-tab.right {
  right: 3px;
}
.black {
  position: relative;
  flex: 1;
  background: #000;
}
.black .region-tab {
  background: none;
}
.mode {
  grid-template-columns: 18px 1fr;
  flex: none;
  width: 105px;
  margin-right: 5px;
}
.mode .lead {
  margin-left: 3px;
}
.mode select, .mode .arrows {
  grid-area: 1 / 2;
}
.mode select {
  padding: 0 3px;
}
.shading {
  width: 33px;
  margin-right: 4px;
}
.pivot, .transform {
  margin-right: 5px;
}
.group.pivot .dark {
  width: 31px;
}
.group .orient {
  width: 64px;
  height: 17px;
  border: 0;
  border-radius: 0;
}
.layer-grid {
  flex: none;
  width: 47px;
  height: 19px;
  margin-right: 5px;
  border: 1px solid #3a3a3a;
  border-radius: 4px;
  background:
    repeating-linear-gradient(90deg, transparent 0 8px, #555 8px 9px),
    linear-gradient(#999 0 8px, #444 8px 9px, #8d8d8d 9px);
}
.layer-grid.first {
  background:
    radial-gradient(circle at 4px 4px, #222 0 1px, transparent 3px),
    repeating-linear-gradient(90deg, transparent 0 8px, #555 8px 9px),
    linear-gradient(#999 0 8px, #444 8px 9px, #8d8d8d 9px);
}

/* Text editor */
.group .wide {
  width: 56px;
  gap: 5px;
}
.view-toggles {
  display: flex;
  gap: 2px;
  margin-left: 6px;
}
.view-toggles button {
  padding: 0;
  border: 1px solid #333;
  border-radius: 3px;
  background: #555;
}
.view-toggles svg {
  width: 14px;
  height: 15px;
}

/* Logic editor */
.logic-body {
  flex: 1;
  min-height: 0;
  display: grid;
  grid-template-columns: 411px minmax(0, 1fr);
}
.game-props {
  padding: 0 8px;
  border-right: 1px solid #6a6a6a;
}
h2 {
  display: flex;
  align-items: center;
  height: 20px;
  font-size: 11px;
}
h2 .tri {
  width: 8px;
  height: 8px;
  margin: 0 3px 0 5px;
}
h2 .grip {
  width: 12px;
  height: 5px;
  margin-left: auto;
}
.add-prop, .start, .invert, .remove {
  border: 1px solid #333;
  border-radius: 4px;
  background: linear-gradient(#a2a2a2, #868686);
}
.add-prop {
  display: grid;
  grid-template-columns: 20px 1fr;
  align-items: center;
  width: 100%;
  height: 19px;
  margin: 10px 0 5px;
  padding: 0 2px;
}
.prop-row {
  display: flex;
  align-items: center;
  height: 32px;
  padding: 0 5px;
  border: 1px solid #4a4a4a;
  border-radius: 4px;
  background: #7d7d7d;
}
.prop-row input[type="text"], .prop-row .drop {
  width: 150px;
  height: 19px;
  margin-right: 8px;
}
input[type="checkbox"] {
  appearance: none;
  display: grid;
  flex: none;
  width: 14px;
  height: 14px;
  margin: 0 10px 0 2px;
  border: 1px solid #333;
  border-radius: 3px;
  background: #505050;
}
input[type="checkbox"]:checked::before {
  content: "";
  background: #ddd;
  clip-path: polygon(15% 50%, 27% 38%, 42% 56%, 85% 4%, 98% 12%, 45% 80%);
}
.debug {
  width: 20px;
  height: 20px;
  margin-right: 8px;
  padding: 1px;
  border: 1px solid #333;
  border-radius: 4px;
  background: #8c99ad;
}
.bricks {
  position: relative;
  display: flex;
  gap: 117px;
  padding-left: 12px;
  overflow: hidden;
  background: #646464;
  font-size: 13px;
}
.sensors {
  flex: none;
  width: 422px;
}
.brick-head {
  display: grid;
  grid-template-columns: 60% 40%;
  height: 24px;
  margin-top: -16px;
  border: 1px solid #333;
  border-radius: 4px;
  background: #6f6f6f;
  color: #eee;
  line-height: 22px;
  text-align: center;
}
.brick-head .drop {
  height: 23px;
  border-radius: 0 4px 4px 0;
}
.controllers {
  flex: 1;
  padding-right: 2px;
}
.controllers .brick-head {
  background: #909090;
}
.brick-row {
  display: flex;
  gap: 16px;
  margin-top: 21px;
}
.socket {
  width: 9px;
  height: 9px;
  margin-top: 7px;
  border-radius: 50%;
  background: #111;
  box-shadow: 1px 1px 0 #888;
}
.brick {
  width: 392px;
  border: 1px solid #333;
  border-radius: 5px;
  background: #7f7f7f;
}
.brick-title, .brick-pulse {
  display: flex;
  align-items: center;
  border-bottom: 1px solid #333;
}
.brick-title {
  height: 39px;
  padding: 2px 5px 0 9px;
}
.brick .drop, .brick .group, .brick .number, .brick .search, .invert, .remove, .brick input[type="text"] {
  height: 25px;
}
.brick .drop select, .brick input[type="text"] {
  padding: 0 8px;
}
.brick .arrows {
  height: 18px;
  margin-right: 3px;
}
.brick-title .drop {
  width: 115px;
  margin: 0 10px 0 14px;
}
.brick-title input[type="text"] {
  width: 116px;
}
.brick-title .pin {
  margin: 0 16px 0 12px;
}
.pin svg {
  width: 20px;
  height: 20px;
}
.brick-title input[type="checkbox"] {
  width: 18px;
  height: 18px;
  margin: 0 14px 0 0;
}
.remove {
  width: 25px;
  padding: 2px;
}
.remove svg, .search button svg {
  width: 19px;
  height: 19px;
}
.brick-pulse {
  height: 41px;
  padding: 6px 6px 0 4px;
}
.brick-pulse .group button {
  width: 24px;
}
.brick-pulse .group button svg {
  width: 18px;
  height: 18px;
}
.brick-pulse .taps {
  margin: 0 9px;
}
.brick-pulse .taps button {
  width: 49px;
}
.invert {
  width: 99px;
}
.brick-fields {
  display: grid;
  grid-template-columns: 124px 1fr;
  align-items: center;
  gap: 10px 0;
  padding: 11px 6px 5px 13px;
}
.number {
  display: flex;
  align-items: center;
  flex: 1;
  min-width: 0;
  height: 18px;
  padding: 0 7px;
  border: 1px solid #333;
  border-radius: 12px;
  background: linear-gradient(#9b9b9b, #b0b0b0);
}
.number i {
  color: #6a6a6a;
}
.number span {
  margin-left: 4px;
}
.number input[type="text"] {
  flex: 1;
  width: 20px;
  padding: 0 4px;
  border: 0;
  background: none;
  text-align: right;
}
.number.disabled {
  border-color: #5c5c5c;
  background: #888;
  color: #5c5c5c;
}
.number.disabled span {
  margin-left: 7px;
}
.number.disabled input[type="text"] {
  height: 20px;
  padding-right: 9px;
}
.search {
  display: flex;
  align-items: center;
  padding: 0 2px 0 11px;
  border: 1px solid #333;
  border-radius: 4px;
  background: linear-gradient(#959595, #ababab);
}
.search input[type="text"] {
  flex: 1;
  height: 22px;
  padding: 0 11px;
  border: 0;
  background: none;
}
.cursor {
  position: absolute;
  top: 161px;
  left: 93px;
  width: 12px;
  height: 18px;
}

/* Properties editor */
.tabs {
  display: flex;
  margin-left: 7px;
}
.tabs button {
  flex: none;
  width: 19px;
  height: 19px;
  padding: 1px;
  border: 1px solid #2a2a2a;
  border-left-width: 0;
  background: #474747;
}
.tabs .on {
  background: #5478b4;
}
.tabs svg {
  opacity: .7;
}
.tabs .on svg {
  opacity: 1;
}
.props-body {
  position: relative;
  display: flex;
  flex: 1;
  min-height: 0;
  overflow: hidden;
}
.panels {
  flex: 1;
  min-width: 0;
  padding-left: 4px;
}
.crumb {
  display: flex;
  align-items: center;
  gap: 5px;
  height: 33px;
  padding-left: 4px;
}
.crumb, .start, .numbers {
  font-size: 11px;
}
.panel {
  border-top: 1px solid #444;
  padding: 1px 4px 6px;
}
.panel h2 .tri {
  margin-left: 3px;
}
.start {
  display: block;
  width: 92px;
  height: 19px;
  margin-top: 9px;
}
.panel p {
  margin: 7px 7px 6px;
  line-height: 16px;
}
.numbers {
  display: flex;
}
.numbers .number:first-child {
  border-radius: 9px 0 0 9px;
}
.numbers .number:last-child {
  border-left: 0;
  border-radius: 0 9px 9px 0;
}
.vscroll {
  width: 12px;
  margin: 4px 4px 4px 6px;
  border-radius: 6px;
  background: #585858;
}
.vscroll span {
  display: block;
  height: 24%;
  border: 1px solid #444;
  border-radius: 6px;
  background: linear-gradient(90deg, #999, #838383);
}

/* Taskbar */
.taskbar {
  display: flex;
  align-items: center;
  flex: none;
  height: 38px;
  background: #4b4947;
  color: #fff;
}
.taskbar button {
  display: grid;
  place-items: center;
  height: 36px;
  padding: 0;
  border: 1px solid transparent;
  background: none;
}
.taskbar .start-menu {
  width: 46px;
}
.start-menu svg {
  width: 26px;
  height: 24px;
}
.apps {
  display: flex;
  flex: 1;
  gap: 4px;
  padding-left: 2px;
}
.apps button {
  width: 54px;
}
.apps svg {
  width: 28px;
  height: 28px;
}
.apps .open {
  border-color: #8d8b88;
  background: #696866;
}
.apps .stacked {
  padding-right: 8px;
  box-shadow: inset -4px 0 0 #5b5957, inset -5px 0 0 #999;
}
.apps .current {
  border-color: #c9c9c9;
  background: #8f8e8c;
}
.tray {
  display: flex;
  gap: 7px;
}
.tray svg {
  width: 16px;
  height: 16px;
}
.clock {
  width: 78px;
  font-family: "Open Sans", sans-serif;
  font-size: 11px;
  line-height: 16px;
  text-align: center;
}
.clock time {
  display: block;
}
```
